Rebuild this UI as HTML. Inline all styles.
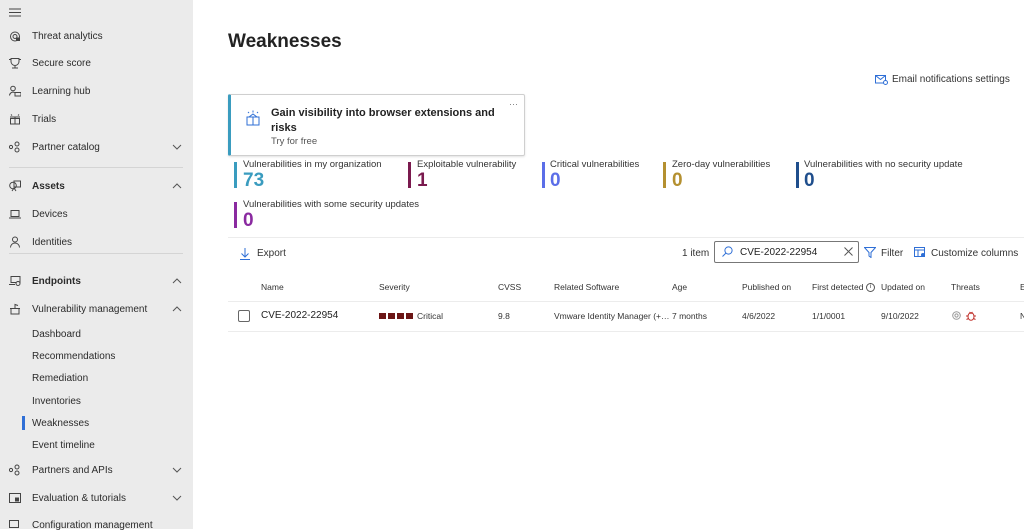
<!DOCTYPE html>
<html><head><meta charset="utf-8"><style>
*{box-sizing:border-box;margin:0;padding:0}
body{width:1024px;height:529px;overflow:hidden;font-family:"Liberation Sans",sans-serif;background:#fff;color:#222;position:relative;font-size:10px}
.a{position:absolute;white-space:nowrap}
#sb{position:absolute;left:0;top:0;width:193px;height:529px;background:#ebebeb}
.it{position:absolute;left:32px;font-size:10px;color:#2b2b2b;transform:translateY(-45%)}
.ic{position:absolute;left:9px;width:12px;height:11px;transform:translateY(-50%)}
.ch{position:absolute;left:172px;width:10px;height:6px;transform:translateY(-50%)}
.dv{position:absolute;left:9px;width:174px;height:1px;background:#d4d4d4}
.bar{position:absolute;width:3px;height:26px}
.lbl{position:absolute;font-size:9.5px;color:#333}
.num{position:absolute;font-size:19px;font-weight:bold}
.hd{position:absolute;top:282px;font-size:8.5px;color:#333}
.rw{position:absolute;top:311px;font-size:8.5px;color:#333}
</style></head><body>
<div id="sb">
<svg class="a" style="left:9px;top:8px" width="12" height="9"><path d="M0 1h12M0 4.5h12M0 8h12" stroke="#444" stroke-width="1"/></svg>
<svg class="ic" style="top:36px" viewBox="0 0 12 11"><circle cx="6" cy="6" r="4.5" fill="none" stroke="#444"/><circle cx="6" cy="6" r="2" fill="none" stroke="#444"/><rect x="7" y="7" width="4" height="3.5" fill="#444"/></svg><div class="it" style="top:36px">Threat analytics</div>
<svg class="ic" style="top:63px" viewBox="0 0 12 11"><path d="M2 1h8v3a4 4 0 0 1-8 0zM6 8v2M3 10.5h6M0 2h2M10 2h2" fill="none" stroke="#444"/></svg><div class="it" style="top:63px">Secure score</div>
<svg class="ic" style="top:91px" viewBox="0 0 12 11"><circle cx="4" cy="3" r="2.3" fill="none" stroke="#444"/><path d="M0.5 10a3.5 3.5 0 0 1 5-3M6 7h6v3.5H6z" fill="none" stroke="#444"/></svg><div class="it" style="top:91px">Learning hub</div>
<svg class="ic" style="top:119px" viewBox="0 0 12 11"><path d="M1.5 5h9v5.5h-9zM1 3.5h10M6 3.5v7" fill="none" stroke="#444"/><path d="M2 1l1 1M10 1l-1 1" stroke="#444"/></svg><div class="it" style="top:119px">Trials</div>
<svg class="ic" style="top:147px" viewBox="0 0 12 11"><circle cx="2" cy="5.5" r="1.6" fill="none" stroke="#444"/><circle cx="8" cy="2.5" r="2" fill="none" stroke="#444"/><circle cx="8" cy="8.5" r="2" fill="none" stroke="#444"/></svg><div class="it" style="top:147px">Partner catalog</div>
<svg class="ch" style="top:147px" viewBox="0 0 10 6"><path d="M1 1l4 4 4-4" fill="none" stroke="#555"/></svg>
<div class="dv" style="top:167px"></div>
<svg class="ic" style="top:186px" viewBox="0 0 12 11"><rect x="5" y="0.5" width="6.5" height="6" fill="none" stroke="#444"/><circle cx="4" cy="5" r="3.3" fill="none" stroke="#444"/><path d="M3 10.5l2-3 2 3" fill="none" stroke="#444"/></svg><div class="it" style="top:186px;font-weight:bold">Assets</div>
<svg class="ch" style="top:186px" viewBox="0 0 10 6"><path d="M1 5l4-4 4 4" fill="none" stroke="#555"/></svg>
<svg class="ic" style="top:214px" viewBox="0 0 12 11"><rect x="2" y="2" width="8" height="6" fill="none" stroke="#444"/><path d="M0 9.5h12" stroke="#444"/></svg><div class="it" style="top:214px">Devices</div>
<svg class="ic" style="top:242px" viewBox="0 0 12 11"><circle cx="6" cy="3" r="2.5" fill="none" stroke="#444"/><path d="M1.5 11a4.5 4.5 0 0 1 9 0" fill="none" stroke="#444"/></svg><div class="it" style="top:242px">Identities</div>
<div class="dv" style="top:253px"></div>
<svg class="ic" style="top:281px" viewBox="0 0 12 11"><rect x="2" y="1" width="9" height="6" fill="none" stroke="#444"/><path d="M0 9h6" stroke="#444"/><circle cx="9" cy="8" r="2" fill="#ebebeb" stroke="#444"/></svg><div class="it" style="top:281px;font-weight:bold">Endpoints</div>
<svg class="ch" style="top:281px" viewBox="0 0 10 6"><path d="M1 5l4-4 4 4" fill="none" stroke="#555"/></svg>
<svg class="ic" style="top:309px" viewBox="0 0 12 11"><path d="M2 5h8v5.5H2zM1 5h10M6 5V1l3 1" fill="none" stroke="#444"/></svg><div class="it" style="top:309px">Vulnerability management</div>
<svg class="ch" style="top:309px" viewBox="0 0 10 6"><path d="M1 5l4-4 4 4" fill="none" stroke="#555"/></svg>
<div class="it" style="top:334px">Dashboard</div>
<div class="it" style="top:356px">Recommendations</div>
<div class="it" style="top:378px">Remediation</div>
<div class="it" style="top:401px">Inventories</div>
<div class="a" style="left:22px;top:416px;width:3px;height:14px;background:#2f6fd6"></div>
<div class="it" style="top:423px">Weaknesses</div>
<div class="it" style="top:445px">Event timeline</div>
<svg class="ic" style="top:470px" viewBox="0 0 12 11"><circle cx="2" cy="5.5" r="1.6" fill="none" stroke="#444"/><circle cx="8" cy="2.5" r="2" fill="none" stroke="#444"/><circle cx="8" cy="8.5" r="2" fill="none" stroke="#444"/></svg><div class="it" style="top:470px">Partners and APIs</div>
<svg class="ch" style="top:470px" viewBox="0 0 10 6"><path d="M1 1l4 4 4-4" fill="none" stroke="#555"/></svg>
<svg class="ic" style="top:498px" viewBox="0 0 12 11"><rect x="0.5" y="1" width="11" height="9" fill="none" stroke="#444"/><rect x="6" y="5" width="4" height="4" fill="#444"/></svg><div class="it" style="top:498px">Evaluation &amp; tutorials</div>
<svg class="ch" style="top:498px" viewBox="0 0 10 6"><path d="M1 1l4 4 4-4" fill="none" stroke="#555"/></svg>
<svg class="ic" style="top:525px" viewBox="0 0 12 11"><rect x="0.5" y="1" width="9" height="7" fill="none" stroke="#444"/></svg><div class="it" style="top:525px">Configuration management</div>
</div>

<div class="a" style="left:228px;top:31px;font-size:19px;font-weight:bold;color:#222">Weaknesses</div>
<svg class="a" style="left:875px;top:75px" width="13" height="10" viewBox="0 0 13 10"><rect x="0.5" y="0.5" width="10" height="7.5" fill="none" stroke="#2f6fd6"/><path d="M0.5 0.5l5 4 5-4" fill="none" stroke="#2f6fd6"/><circle cx="10.5" cy="7.5" r="2" fill="#fff" stroke="#2f6fd6"/></svg>
<div class="a" style="left:892px;top:74px;font-size:10px;color:#333">Email notifications settings</div>

<div class="a" style="left:228px;top:94px;width:297px;height:62px;border:1px solid #cfcfcf;border-left:3px solid #3a9cbf;border-radius:2px;box-shadow:0 1px 2px rgba(0,0,0,.12)"></div>
<svg class="a" style="left:245px;top:110px" width="16" height="16" viewBox="0 0 16 16"><path d="M2 7h12v8H2zM8 7v8M4 7l4-3 4 3" fill="none" stroke="#2f6fd6"/><path d="M3 2l1 1M8 0.5v2M13 2l-1 1" stroke="#2f6fd6"/></svg>
<div class="a" style="left:271px;top:106px;font-size:11px;font-weight:bold;line-height:15px;color:#222">Gain visibility into browser extensions and<br>risks</div>
<div class="a" style="left:271px;top:136px;font-size:9.5px;color:#555">Try for free</div>
<div class="a" style="left:509px;top:99px;font-size:9px;color:#777">···</div>

<div class="bar" style="left:234px;top:162px;background:#3a9cbf"></div><div class="lbl" style="left:243px;top:159px">Vulnerabilities in my organization</div><div class="num" style="left:243px;top:170px;color:#3a9cbf">73</div>
<div class="bar" style="left:408px;top:162px;background:#7a1a4e"></div><div class="lbl" style="left:417px;top:159px">Exploitable vulnerability</div><div class="num" style="left:417px;top:170px;color:#7a1a4e">1</div>
<div class="bar" style="left:542px;top:162px;background:#5b6ee8"></div><div class="lbl" style="left:550px;top:159px">Critical vulnerabilities</div><div class="num" style="left:550px;top:170px;color:#5b6ee8">0</div>
<div class="bar" style="left:663px;top:162px;background:#b49030"></div><div class="lbl" style="left:672px;top:159px">Zero-day vulnerabilities</div><div class="num" style="left:672px;top:170px;color:#b49030">0</div>
<div class="bar" style="left:796px;top:162px;background:#1f4e8c"></div><div class="lbl" style="left:804px;top:159px">Vulnerabilities with no security update</div><div class="num" style="left:804px;top:170px;color:#1f4e8c">0</div>
<div class="bar" style="left:234px;top:202px;background:#8a2aa0"></div><div class="lbl" style="left:243px;top:199px">Vulnerabilities with some security updates</div><div class="num" style="left:243px;top:210px;color:#8a2aa0">0</div>

<div class="a" style="left:228px;top:237px;width:796px;height:1px;background:#ececec"></div>
<svg class="a" style="left:240px;top:248px" width="10" height="12" viewBox="0 0 10 12"><path d="M5 0v9M1.5 5.5L5 9l3.5-3.5M0 11.5h10" fill="none" stroke="#2f6fd6"/></svg>
<div class="a" style="left:257px;top:248px;font-size:10px;color:#333">Export</div>
<div class="a" style="left:682px;top:248px;font-size:10px;color:#333">1 item</div>
<div class="a" style="left:714px;top:241px;width:145px;height:22px;border:1px solid #777;border-radius:2px"></div>
<svg class="a" style="left:722px;top:246px" width="11" height="11" viewBox="0 0 11 11"><circle cx="6.5" cy="4.5" r="3.6" fill="none" stroke="#2f6fd6"/><path d="M4 7l-3.5 3.5" stroke="#2f6fd6"/></svg>
<div class="a" style="left:740px;top:247px;font-size:10px;color:#222">CVE-2022-22954</div>
<svg class="a" style="left:844px;top:247px" width="9" height="9"><path d="M0.5 0.5l8 8M8.5 0.5l-8 8" stroke="#555"/></svg>
<svg class="a" style="left:864px;top:247px" width="12" height="11" viewBox="0 0 12 11"><path d="M0.5 0.5h11L7 5.5v5L5 9V5.5z" fill="none" stroke="#2f6fd6"/></svg>
<div class="a" style="left:881px;top:248px;font-size:10px;color:#333">Filter</div>
<svg class="a" style="left:914px;top:247px" width="12" height="11" viewBox="0 0 12 11"><rect x="0.5" y="0.5" width="10" height="9" fill="none" stroke="#2f6fd6"/><path d="M0.5 3h10M4 3v7" stroke="#2f6fd6"/><circle cx="9" cy="8" r="2" fill="#2f6fd6"/></svg>
<div class="a" style="left:931px;top:248px;font-size:10px;color:#333">Customize columns</div>

<div class="hd" style="left:261px">Name</div>
<div class="hd" style="left:379px">Severity</div>
<div class="hd" style="left:498px">CVSS</div>
<div class="hd" style="left:554px">Related Software</div>
<div class="hd" style="left:672px">Age</div>
<div class="hd" style="left:742px">Published on</div>
<div class="hd" style="left:812px">First detected <span style="display:inline-block;width:9px;height:9px;border:1px solid #555;border-radius:50%;font-size:6px;text-align:center;line-height:7px;vertical-align:middle">i</span></div>
<div class="hd" style="left:881px">Updated on</div>
<div class="hd" style="left:951px">Threats</div>
<div class="hd" style="left:1020px">E</div>
<div class="a" style="left:228px;top:301px;width:796px;height:1px;background:#ececec"></div>
<div class="a" style="left:238px;top:310px;width:12px;height:12px;border:1px solid #666;border-radius:2px"></div>
<div class="rw" style="left:261px;top:310px;font-size:10px;color:#222">CVE-2022-22954</div>
<div class="a" style="left:379px;top:313px;width:34px;height:6px;background:repeating-linear-gradient(90deg,#6b1515 0 7px,transparent 7px 9px)"></div>
<div class="rw" style="left:417px">Critical</div>
<div class="rw" style="left:498px">9.8</div>
<div class="rw" style="left:554px">Vmware Identity Manager (+…</div>
<div class="rw" style="left:672px">7 months</div>
<div class="rw" style="left:742px">4/6/2022</div>
<div class="rw" style="left:812px">1/1/0001</div>
<div class="rw" style="left:881px">9/10/2022</div>
<svg class="a" style="left:952px;top:311px" width="9" height="9"><circle cx="4.5" cy="4.5" r="3.8" fill="none" stroke="#999"/><circle cx="4.5" cy="4.5" r="1.6" fill="none" stroke="#999"/></svg>
<svg class="a" style="left:966px;top:310px" width="10" height="11" viewBox="0 0 10 11"><ellipse cx="5" cy="6.5" rx="3" ry="3.8" fill="none" stroke="#c0302a"/><path d="M3.5 2l1.5 1.5 1.5-1.5M0 6h2M8 6h2M0.5 9.5l2-1M9.5 9.5l-2-1" stroke="#c0302a" fill="none"/></svg>
<div class="rw" style="left:1020px">N</div>
<div class="a" style="left:228px;top:331px;width:796px;height:1px;background:#ececec"></div>
</body></html>
